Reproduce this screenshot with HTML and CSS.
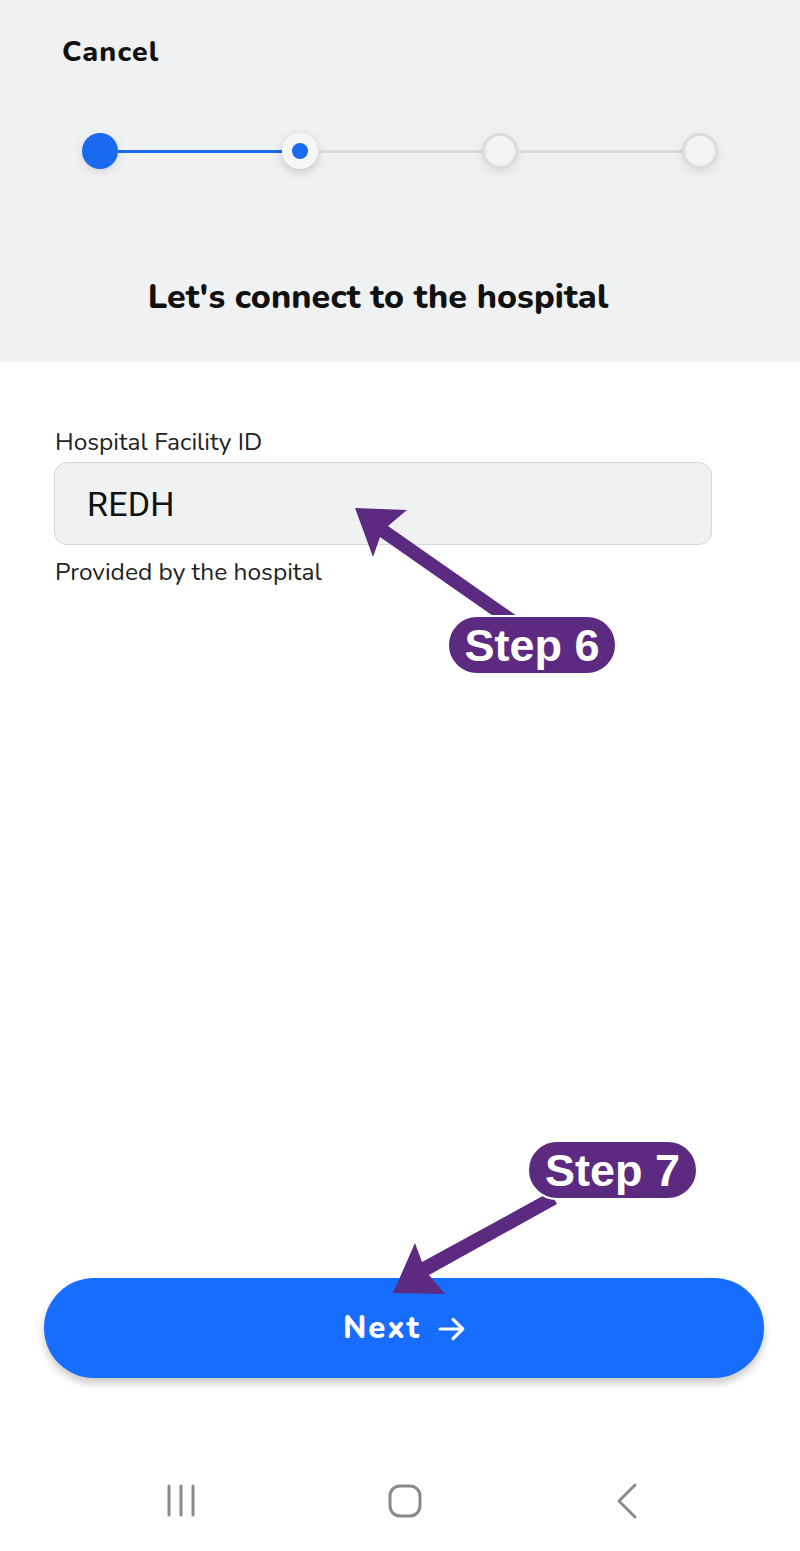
FILE: index.html
```html
<!DOCTYPE html>
<html>
<head>
<meta charset="utf-8">
<link rel="stylesheet" href="styles.css">
</head>
<body>
<div class="screen">
  <header class="top">
    <div class="cancel">Cancel</div>
    <div class="stepper">
      <span class="dot done"></span>
      <span class="line active"></span>
      <span class="dot current"><span class="inner"></span></span>
      <span class="line"></span>
      <span class="dot"></span>
      <span class="line"></span>
      <span class="dot"></span>
    </div>
    <h1 class="title">Let's connect to the hospital</h1>
  </header>
  <main class="body">
    <label class="label">Hospital Facility ID</label>
    <div class="input">REDH</div>
    <div class="helper">Provided by the hospital</div>
    <div class="spacer"></div>
    <button class="next">Next <svg class="arr" viewBox="0 0 28 28" width="30" height="30"><path d="M3 14H24M15 5l9 9-9 9" fill="none" stroke="#fff" stroke-width="3" stroke-linecap="round" stroke-linejoin="round"/></svg></button>
  </main>
  <nav class="navbar">
    <svg width="40" height="40" viewBox="0 0 40 40"><path d="M8 5v29M20 5v29M32 5v29" stroke="#8a8a8a" stroke-width="3" stroke-linecap="round"/></svg>
    <svg width="40" height="40" viewBox="0 0 40 40"><rect x="5" y="5" width="30" height="30" rx="10" fill="none" stroke="#8a8a8a" stroke-width="3"/></svg>
    <svg width="40" height="40" viewBox="0 0 40 40"><path d="M27 4L11 20l16 16" fill="none" stroke="#8a8a8a" stroke-width="3" stroke-linecap="round" stroke-linejoin="round"/></svg>
  </nav>
  <svg class="arrows" width="800" height="1551" viewBox="0 0 800 1551">
    <polygon fill="#5c2a80" points="355,508 407,510 388,526 524,621 516,632 380,537 373,557"/>
    <polygon fill="#5c2a80" points="393,1293 415,1243 422,1262 550,1192 557,1204 429,1275 445,1294"/>
  </svg>
  <div class="badge b6">Step 6</div>
  <div class="badge b7">Step 7</div>
</div>
</body>
</html>
```
FILE: styles.css
```css
* { box-sizing: border-box; }
html, body { margin: 0; padding: 0; background: #fff; }
.screen {
  position: relative;
  width: 800px;
  height: 1551px;
  display: flex;
  flex-direction: column;
  font-family: "Nunito", "Lato", "Open Sans", sans-serif;
  overflow: hidden;
}
.top {
  background: #f0f1f3;
  height: 362px;
  padding-top: 32px;
  display: flex;
  flex-direction: column;
}
.cancel {
  margin-left: 62px;
  font-size: 28.5px;
  font-weight: 800;
  letter-spacing: 1.2px;
  color: #111;
  line-height: 40px;
}
.stepper {
  margin: 61px 0 0 82px;
  width: 636px;
  display: flex;
  align-items: center;
}
.dot {
  width: 36px;
  height: 36px;
  border-radius: 50%;
  flex: none;
  background: #f2f3f5;
  border: 3px solid #dcdcdf;
  box-shadow: 0 3px 8px rgba(0,0,0,0.10);
  display: flex;
  align-items: center;
  justify-content: center;
}
.dot.done {
  background: #1a6af0;
  border: none;
  box-shadow: 0 3px 8px rgba(0,0,0,0.12);
}
.dot.current {
  border: none;
  background: #f5f6f8;
  box-shadow: 0 3px 10px rgba(0,0,0,0.18);
}
.inner {
  width: 16px;
  height: 16px;
  border-radius: 50%;
  background: #1a6af0;
}
.line {
  flex: 1;
  height: 3px;
  background: #dadadd;
}
.line.active { background: #1a6af0; }
.title {
  margin: 106px 0 0;
  text-align: center;
  font-size: 34px;
  font-weight: 800;
  color: #111;
  letter-spacing: 0.1px;
  padding-right: 44px;
  line-height: 44px;
}
.body {
  flex: 1;
  display: flex;
  flex-direction: column;
  padding: 65px 36px 0 54px;
}
.label {
  font-size: 24.5px;
  color: #222;
  line-height: 30px;
  margin-left: 1px;
}
.input {
  margin-top: 5px;
  width: 658px;
  height: 83px;
  border: 1.5px solid #d6d7da;
  border-radius: 13px;
  background: #f0f1f3;
  padding-left: 32px;
  display: flex;
  align-items: center;
  font-family: "Roboto", "DejaVu Sans Condensed", sans-serif;
  font-size: 34px;
  color: #111;
  letter-spacing: 0.2px;
}
.helper {
  margin-top: 12px;
  font-size: 24.5px;
  color: #222;
  line-height: 30px;
  margin-left: 1px;
}
.spacer { flex: 1; }
.next {
  margin: 0 0 0 -10px;
  width: 720px;
  height: 100px;
  border: none;
  border-radius: 50px;
  background: #176dff;
  box-shadow: 0 5px 8px rgba(0,0,0,0.22);
  color: #fff;
  font-family: "Nunito", "Lato", sans-serif;
  font-size: 31px;
  font-weight: 800;
  letter-spacing: 2px;
  display: flex;
  align-items: center;
  justify-content: center;
  gap: 16px;
  padding: 0 0 0 2px;
}
.arr { margin-top: 2px; }
.navbar {
  height: 173px;
  display: flex;
  justify-content: space-between;
  align-items: center;
  padding: 72px 152px 0 161px;
}
.arrows {
  position: absolute;
  left: 0;
  top: 0;
  pointer-events: none;
}
.badge {
  position: absolute;
  height: 60px;
  border-radius: 30px;
  background: #5c2a80;
  color: #fff;
  font-family: "Liberation Sans", Arial, sans-serif;
  font-weight: 700;
  font-size: 45px;
  line-height: 58px;
  text-align: center;
  border: 2px solid #fff;
}
.b6 { left: 447px; top: 615px; width: 170px; }
.b7 { left: 527px; top: 1140px; width: 171px; }
```
